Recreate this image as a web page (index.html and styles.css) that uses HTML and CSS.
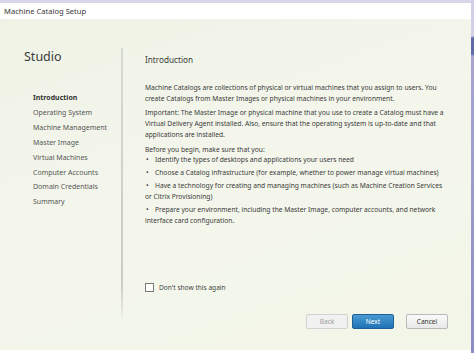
FILE: index.html
```html
<!DOCTYPE html>
<html lang="en">
<head>
    <meta charset="UTF-8">
    <title>Machine Catalog Setup</title>
    <link rel="stylesheet" href="styles.css">
</head>
<body>
    <div class="frame">
        <div class="dialog">
            <div class="titlebar">Machine Catalog Setup</div>
            <div class="window">
                <div class="sidebar">
                    <h1>Studio</h1>
                    <ul class="steps">
                        <li class="current">Introduction</li>
                        <li>Operating System</li>
                        <li>Machine Management</li>
                        <li>Master Image</li>
                        <li>Virtual Machines</li>
                        <li>Computer Accounts</li>
                        <li>Domain Credentials</li>
                        <li>Summary</li>
                    </ul>
                </div>
                <div class="divider"></div>
                <div class="main">
                    <h2>Introduction</h2>
                    <p>Machine Catalogs are collections of physical or virtual machines that you assign to users. You create Catalogs from Master Images or physical machines in your environment.</p>
                    <p>Important: The Master Image or physical machine that you use to create a Catalog must have a Virtual Delivery Agent installed. Also, ensure that the operating system is up-to-date and that applications are installed.</p>
                    <p class="lead">Before you begin, make sure that you:</p>
                    <ul class="bullets">
                        <li class="first">Identify the types of desktops and applications your users need</li>
                        <li>Choose a Catalog infrastructure (for example, whether to power manage virtual machines)</li>
                        <li>Have a technology for creating and managing machines (such as Machine Creation Services or Citrix Provisioning)</li>
                        <li>Prepare your environment, including the Master Image, computer accounts, and network interface card configuration.</li>
                    </ul>
                    <label class="check"><span class="box"></span>Don't show this again</label>
                    <div class="buttons">
                        <button class="btn" disabled>Back</button>
                        <button class="btn primary">Next</button>
                        <button class="btn cancel">Cancel</button>
                    </div>
                </div>
            </div>
        </div>
        <div class="edge"></div>
    </div>
</body>
</html>
```

FILE: styles.css
```css
body {
    margin: 0;
    font-family: "Noto Sans", "Open Sans", sans-serif;
    background: #ffffff;
}

.frame {
    display: flex;
    width: 474px;
    height: 353px;
    overflow: hidden;
}

.dialog {
    flex: 1;
    display: flex;
    flex-direction: column;
    border-top: 3px solid #d9d6ea;
    border-bottom: 3px solid #ffffff;
}

.edge {
    width: 3px;
    background: linear-gradient(to bottom, #d4d0ea 0, #d4d0ea 36px, #5f6aa8 38px, #5f6aa8 54px, #a8a6d0 56px, #8c8cc4 100%);
}

.titlebar {
    height: 16px;
    padding-left: 4px;
    font-size: 7.6px;
    line-height: 16px;
    color: #3a3a3a;
    background: #ffffff;
}

.window {
    flex: 1;
    display: flex;
    background: linear-gradient(160deg, #eff2e5 0%, #f4f6ec 45%, #f2f6e8 100%);
}

.sidebar {
    width: 121px;
}

.sidebar h1 {
    margin: 29px 0 0 24px;
    font-size: 12.5px;
    font-weight: normal;
    color: #3b3b3b;
}

.steps {
    list-style: none;
    margin: 26px 0 0 33px;
    padding: 0;
}

.steps li {
    font-size: 7px;
    line-height: 14.9px;
    color: #555555;
}

.steps li.current {
    font-weight: bold;
    color: #333333;
}

.divider {
    width: 2px;
    margin: 29px 0 26px;
    background: linear-gradient(to bottom, #d6d8d2 0%, #c9cbc6 85%, rgba(200, 202, 196, 0) 100%);
}

.main {
    flex: 1;
    display: flex;
    flex-direction: column;
    padding: 35px 22px 0 22px;
}

.main h2 {
    margin: 0;
    font-size: 8.2px;
    font-weight: normal;
    color: #3b3b3b;
}

.main p {
    margin: 18px 0 0;
    font-size: 6.7px;
    line-height: 10.7px;
    color: #3a3a3a;
}

.main p + p {
    margin-top: 4px;
}

.bullets {
    list-style: none;
    margin: 0;
    padding: 0;
    font-size: 6.7px;
    line-height: 10.7px;
    color: #3a3a3a;
}

.bullets li {
    margin-top: 2.4px;
}

.bullets li.first {
    margin-top: 0;
}

.bullets li::before {
    content: "\2022";
    display: inline-block;
    width: 9px;
    margin-left: 1px;
}

.check {
    display: flex;
    align-items: center;
    height: 9px;
    margin-top: auto;
    font-size: 6.6px;
    color: #444444;
}

.box {
    width: 7px;
    height: 7px;
    margin-right: 5px;
    border: 1px solid #7a7a7a;
    background: #ffffff;
}

.buttons {
    display: flex;
    justify-content: flex-end;
    gap: 4px;
    margin: 22px 0 21px;
    padding-right: 1px;
}

.btn {
    width: 42px;
    height: 15px;
    padding: 0;
    font-family: inherit;
    font-size: 6.6px;
    color: #333333;
    background: linear-gradient(to bottom, #fafafa, #e8e8e8);
    border: 1px solid #b9b9b9;
    border-radius: 2px;
}

.btn[disabled] {
    color: #a0a0a0;
    background: #f1f1f1;
    border-color: #d2d2d2;
}

.btn.primary {
    color: #ffffff;
    background: linear-gradient(to bottom, #4a9bd3, #1f72b4);
    border-color: #1f5f95;
}

.btn.cancel {
    margin-left: 8px;
}
```
